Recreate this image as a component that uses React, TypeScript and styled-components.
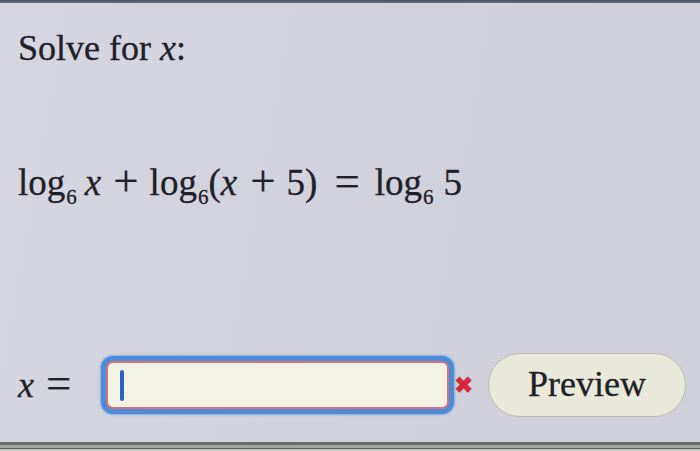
import React from 'react';
import styled, { createGlobalStyle } from 'styled-components';

const GlobalStyle = createGlobalStyle`
    html, body {
        margin: 0;
        padding: 0;
        background: #d1d2dc;
    }
`;

const Screen = styled.div`
    display: flex;
    flex-direction: column;
    width: 700px;
    height: 451px;
    overflow: hidden;
    font-family: 'Liberation Serif', 'Times New Roman', serif;
    color: #202028;
    -webkit-text-stroke: 0.3px #202028;
`;

const TopEdge = styled.div`
    height: 3px;
    background: linear-gradient(#454d60, #6a7284);
`;

const Panel = styled.div`
    flex: 1;
    display: flex;
    flex-direction: column;
    padding: 25px 0 0 18px;
    background: linear-gradient(100deg, #d5d6df 0%, #d0d1db 55%, #cfd0da 100%);
`;

const BottomEdge = styled.div`
    height: 9px;
    background: linear-gradient(
        #6b6f6c 0px,
        #6b6f6c 3px,
        #a3a7a4 3px,
        #a3a7a4 6px,
        #5d615e 6px,
        #5d615e 7px,
        #c3c7c4 7px
    );
`;

const Title = styled.div`
    font-size: 36px;
    line-height: 40px;
    height: 40px;
`;

const Equation = styled.div`
    margin-top: 95px;
    font-size: 37px;
    line-height: 40px;
    height: 40px;
    white-space: nowrap;
`;

const Var = styled.i<{ $lead?: number }>`
    font-style: italic;
    margin-left: ${props => props.$lead ?? 0}px;
`;

const Num = styled.span<{ $lead?: number }>`
    margin-left: ${props => props.$lead ?? 0}px;
`;

const Sub = styled.span`
    font-size: 21px;
    line-height: 0;
    vertical-align: -9px;
    margin-left: 1px;
`;

// relation and binary operators are drawn wider, as in typeset math
const Op = styled.span<{ $left: number; $right: number }>`
    font-size: 45px;
    line-height: 0;
    vertical-align: -1px;
    -webkit-text-stroke: 0.2px #202028;
    margin: 0 ${props => props.$right}px 0 ${props => props.$left}px;
`;

const AnswerRow = styled.div`
    margin-top: 150px;
    display: flex;
    align-items: center;
    height: 64px;
`;

const Label = styled.div`
    font-size: 36px;
    line-height: 40px;
    width: 82px;
    white-space: nowrap;
`;

const Field = styled.div`
    box-sizing: border-box;
    width: 343px;
    height: 48px;
    margin: 6px;
    border: 2px solid #d3737f;
    border-radius: 7px;
    background: #f3f3e3;
    box-shadow: 0 0 0 5px #4c8bd7, 0 0 2px 6px rgba(110, 160, 225, 0.7);
    display: flex;
    align-items: center;
    padding-left: 12px;
`;

const Caret = styled.span`
    width: 4px;
    height: 31px;
    border-radius: 2px;
    background: #2a63c8;
`;

const ErrorMark = styled.span`
    font-family: 'DejaVu Sans', sans-serif;
    font-size: 23px;
    font-weight: bold;
    line-height: 1;
    color: #d5283c;
    -webkit-text-stroke: 0.6px #d5283c;
    width: 20px;
    margin-left: -1px;
`;

const PreviewButton = styled.button`
    box-sizing: border-box;
    margin-left: 14px;
    width: 198px;
    height: 64px;
    border-radius: 32px;
    border: 1.5px solid #bebdac;
    background: #e9e9da;
    font-family: 'Liberation Serif', 'Times New Roman', serif;
    font-size: 36px;
    color: #202028;
    -webkit-text-stroke: 0.3px #202028;
    padding: 0 0 2px;
`;

export default function App() {
    return (
        <Screen>
            <GlobalStyle />
            <TopEdge />
            <Panel>
                <Title>
                    Solve for <Var>x</Var>:
                </Title>
                <Equation>
                    log<Sub>6</Sub>
                    <Var $lead={8}>x</Var>
                    <Op $left={12} $right={11}>+</Op>
                    log<Sub>6</Sub>(<Var>x</Var>
                    <Op $left={13} $right={11}>+</Op>
                    5)
                    <Op $left={17} $right={15}>=</Op>
                    log<Sub>6</Sub>
                    <Num $lead={10}>5</Num>
                </Equation>
                <AnswerRow>
                    <Label>
                        <Var>x</Var>
                        <Op $left={12} $right={0}>=</Op>
                    </Label>
                    <Field>
                        <Caret />
                    </Field>
                    <ErrorMark>✖</ErrorMark>
                    <PreviewButton>Preview</PreviewButton>
                </AnswerRow>
            </Panel>
            <BottomEdge />
        </Screen>
    );
}
